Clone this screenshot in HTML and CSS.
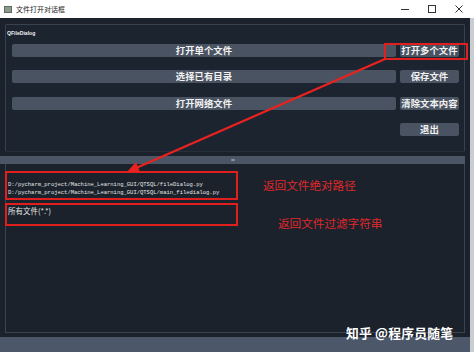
FILE: index.html
```html
<!DOCTYPE html>
<html lang="zh">
<head>
    <meta charset="UTF-8">
    <title>文件打开对话框</title>
    <link rel="stylesheet" href="styles.css">
</head>
<body>
    <div class="titlebar">
        <span class="app-icon"></span>
        <span class="title">文件打开对话框</span>
        <span class="controls">
            <svg width="10" height="10" viewBox="0 0 10 10"><path d="M1 5.5h8" stroke="#333" stroke-width="1"/></svg>
            <svg width="10" height="10" viewBox="0 0 10 10"><rect x="1.5" y="1.5" width="7" height="7" fill="none" stroke="#333" stroke-width="1"/></svg>
            <svg width="10" height="10" viewBox="0 0 10 10"><path d="M1.5 1.5l7 7M8.5 1.5l-7 7" stroke="#333" stroke-width="1"/></svg>
        </span>
    </div>

    <div class="window">
        <div class="main">
            <div class="group">
                <div class="group-title">QFileDialog</div>
                <div class="buttons">
                    <button class="btn">打开单个文件</button>
                    <button class="btn">打开多个文件</button>
                    <button class="btn">选择已有目录</button>
                    <button class="btn">保存文件</button>
                    <button class="btn">打开网络文件</button>
                    <button class="btn">清除文本内容</button>
                    <span></span>
                    <button class="btn">退出</button>
                </div>
            </div>

            <div class="splitter"><span class="grip"></span></div>

            <div class="output">
                <div class="paths">
                    <div>D:/pycharm_project/Machine_Learning_GUI/QTSQL/fileDialog.py</div>
                    <div>D:/pycharm_project/Machine_Learning_GUI/QTSQL/main_filedialog.py</div>
                </div>
                <div class="filter">所有文件(*.*)</div>
            </div>
            <div class="statusbar"></div>
        </div>
        <div class="edge"></div>
    </div>

    <!-- annotations drawn over the screenshot -->
    <div class="mark mark-btn"></div>
    <div class="mark mark-paths"></div>
    <div class="mark mark-filter"></div>
    <svg class="arrow" width="474" height="352" viewBox="0 0 474 352">
        <path d="M385 59 L136 168" stroke="#e8231f" stroke-width="2.4"/>
        <path d="M127 172 L136 162 L140 172 Z" fill="#e8231f"/>
    </svg>
    <div class="note note-paths">返回文件绝对路径</div>
    <div class="note note-filter">返回文件过滤字符串</div>
    <div class="watermark">知乎 @程序员随笔</div>
</body>
</html>
```

FILE: styles.css
```css
body {
    margin: 0;
    width: 474px;
    height: 352px;
    overflow: hidden;
    background-color: #ffffff;
    font-family: "Noto Sans CJK SC", sans-serif;
    position: relative;
}
.titlebar {
    height: 18px;
    display: flex;
    align-items: center;
    padding-left: 4px;
    background-color: #ffffff;
    color: #222;
}
.app-icon {
    width: 8px;
    height: 7px;
    background-color: #8a9a8c;
    border: 1px solid #5d6b60;
    box-sizing: border-box;
}
.title {
    margin-left: 4px;
    font-size: 7px;
}
.controls {
    margin-left: auto;
    display: flex;
    gap: 17px;
    margin-right: 10px;
}
.window {
    display: flex;
    height: 334px;
}
.main {
    width: 470px;
    background-color: #1b222c;
    display: flex;
    flex-direction: column;
}
.edge {
    flex: 1;
    background-color: #c9ccd0;
}
.group {
    margin: 6px 5px 0 5px;
    padding: 0 5px 0 6px;
    height: 126px;
    border: 1px solid #38424e;
    border-bottom-color: #262f3a;
    border-radius: 2px;
    background-color: #1c2430;
}
.group-title {
    height: 14px;
    padding-top: 5px;
    margin-bottom: 0;
    font-family: "Liberation Sans", sans-serif;
    font-size: 6px;
    font-weight: bold;
    line-height: 7px;
    color: #f0f0f0;
    margin-left: -5px;
    transform: scaleX(0.85);
    transform-origin: left;
    box-sizing: border-box;
}
.buttons {
    margin-top: 5px;
    display: grid;
    grid-template-columns: 1fr 59px;
    grid-auto-rows: 13px;
    column-gap: 4px;
    row-gap: 13.3px;
}
.btn {
    margin: 0;
    padding: 0;
    border: none;
    border-radius: 2px;
    background-color: #4a5362;
    color: #f2f2f2;
    font-family: "Noto Sans CJK SC", sans-serif;
    font-size: 9.4px;
    font-weight: bold;
    line-height: 13px;
    white-space: nowrap;
}
.splitter {
    margin-top: 4px;
    width: 465px;
    height: 8px;
    background-color: #4a5566;
    display: flex;
    justify-content: center;
    align-items: center;
}
.grip {
    width: 4px;
    height: 2px;
    background-color: #8893a3;
    border-radius: 1px;
}
.output {
    height: 169px;
    margin-left: 5px;
    width: 460px;
    border-left: 1px solid #3a4450;
    border-right: 1px solid #3a4450;
    border-bottom: 1px solid #3a4450;
    padding-top: 17px;
    box-sizing: border-box;
    color: #e6e6e6;
}
.paths {
    padding-left: 2px;
    font-family: "Liberation Mono", monospace;
    font-size: 5.5px;
    line-height: 8px;
}
.filter {
    margin-top: 9px;
    padding-left: 2px;
    font-size: 7.5px;
    line-height: 10px;
}
.statusbar {
    margin-top: 4px;
    flex: 1;
    background-color: #4c586a;
}
.mark {
    position: absolute;
    border: 2px solid #e0201e;
    box-sizing: border-box;
}
.mark-btn {
    left: 384px;
    top: 43px;
    width: 84px;
    height: 17px;
}
.mark-paths {
    left: 5px;
    top: 171px;
    width: 233px;
    height: 29px;
}
.mark-filter {
    left: 5px;
    top: 203px;
    width: 233px;
    height: 23px;
}
.arrow {
    position: absolute;
    left: 0;
    top: 0;
}
.note {
    position: absolute;
    color: #e0282a;
    font-size: 11.6px;
    line-height: 14px;
}
.note-paths {
    left: 263px;
    top: 178px;
}
.note-filter {
    left: 278px;
    top: 216px;
}
.watermark {
    position: absolute;
    left: 346px;
    top: 325px;
    color: #ffffff;
    font-size: 12.8px;
    font-weight: bold;
    line-height: 16px;
    letter-spacing: 0.2px;
}
```
